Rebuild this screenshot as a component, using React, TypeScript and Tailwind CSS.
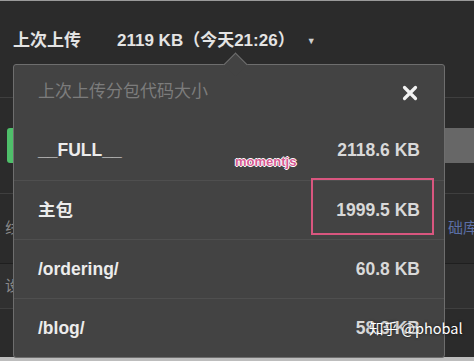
import React from "react";

const rows = [
  { name: "__FULL__", size: "2118.6 KB" },
  { name: "主包", size: "1999.5 KB" },
  { name: "/ordering/", size: "60.8 KB" },
  { name: "/blog/", size: "58.3 KB" },
];

export default function App() {
  return (
    <div
      className="relative w-[474px] h-[361px] overflow-hidden bg-[#2b2b2b] flex flex-col"
      style={{ fontFamily: '"Liberation Sans", "Noto Sans CJK SC", sans-serif' }}
    >
      <div className="h-px bg-[#9a9a9a]" />
      {/* title row */}
      <div className="h-[96px] flex items-start pt-[28px] pl-[13px] text-[17px] leading-[24px] text-[#e4e4e4] font-bold">
        <span>上次上传</span>
        <span className="ml-[36px]">2119 KB（今天21:26）</span>
        <span className="ml-[12px] text-[9px] text-[#cfcfcf]">▼</span>
      </div>
      <div className="h-px bg-[#3f3f3f]" />
      <div className="h-[95px] flex items-center">
        <div className="ml-[7px] w-[10px] h-[35px] rounded-l-[3px] bg-[#4fbf6a]" />
        <div className="ml-auto w-[40px] h-[35px] bg-[#676767]" />
      </div>
      <div className="h-px bg-[#3f3f3f]" />
      <div className="h-[69px] flex items-center justify-between text-[15px]">
        <span className="ml-[5px] text-[#8a8a8a]">线</span>
        <span className="text-[#5b6fa6] mr-[-4px] whitespace-nowrap">础库</span>
      </div>
      <div className="h-px bg-[#1f1f1f]" />
      <div className="h-[44px] flex items-center justify-between bg-[#303030] text-[15px]">
        <span className="ml-[5px] text-[#8a8a8a]">设</span>
        <span />
      </div>
      <div className="h-px bg-[#3f3f3f]" />
      <div className="flex-1" />
      <div className="h-[4px] bg-[#bdbdbd]" />

      {/* popup */}
      <div className="absolute left-[13px] top-[64px] w-[432px] h-[294px] rounded-[3px] border border-[#6e6e6e] bg-[#434343] flex flex-col">
        <div className="absolute left-[213px] top-[-9px] w-[17px] h-[17px] rotate-45 bg-[#434343] border-t border-l border-[#6e6e6e]" />
        <div className="relative h-[56px] flex items-center justify-between pl-[24px] pr-[26px]">
          <span className="text-[17px] text-[#7c7c7c] -translate-y-[1px]">上次上传分包代码大小</span>
          <svg width="16" height="16" viewBox="0 0 16 16">
            <path d="M2.5 2.5 L13.5 13.5 M13.5 2.5 L2.5 13.5" stroke="#f2f2f2" strokeWidth="3.2" strokeLinecap="round" />
          </svg>
        </div>
        {rows.map((r, i) => (
          <div
            key={r.name}
            className={`relative flex items-center justify-between pl-[24px] pr-[24px] h-[59px] ${i === 0 ? "" : "border-t border-[#4f4f4f]"}`}
          >
            <span className="text-[17.5px] font-bold text-[#ececec]">{r.name}</span>
            <span className="text-[17.5px] font-bold text-[#d9d9d9]">{r.size}</span>
          </div>
        ))}
        {/* annotations */}
        <div className="absolute left-[297px] top-[113px] w-[123px] h-[57px] border-2 border-[#d9567f]" />
        <span className="absolute left-[221px] top-[87px] text-[13px] font-bold text-[#d65a92] whitespace-nowrap [text-shadow:1px_0_0_#fff,-1px_0_0_#fff,0_1px_0_#fff,0_-1px_0_#fff]">
          momentjs
        </span>
      </div>

      {/* watermark */}
      <span
        className="absolute left-[369px] top-[316px] whitespace-nowrap text-[14.5px] leading-[24px] text-white [text-shadow:0_0_3px_rgba(0,0,0,0.7)]"
        style={{ fontFamily: '"Noto Sans CJK SC", "Noto Sans", sans-serif' }}
      >
        知乎 @phobal
      </span>
    </div>
  );
}
